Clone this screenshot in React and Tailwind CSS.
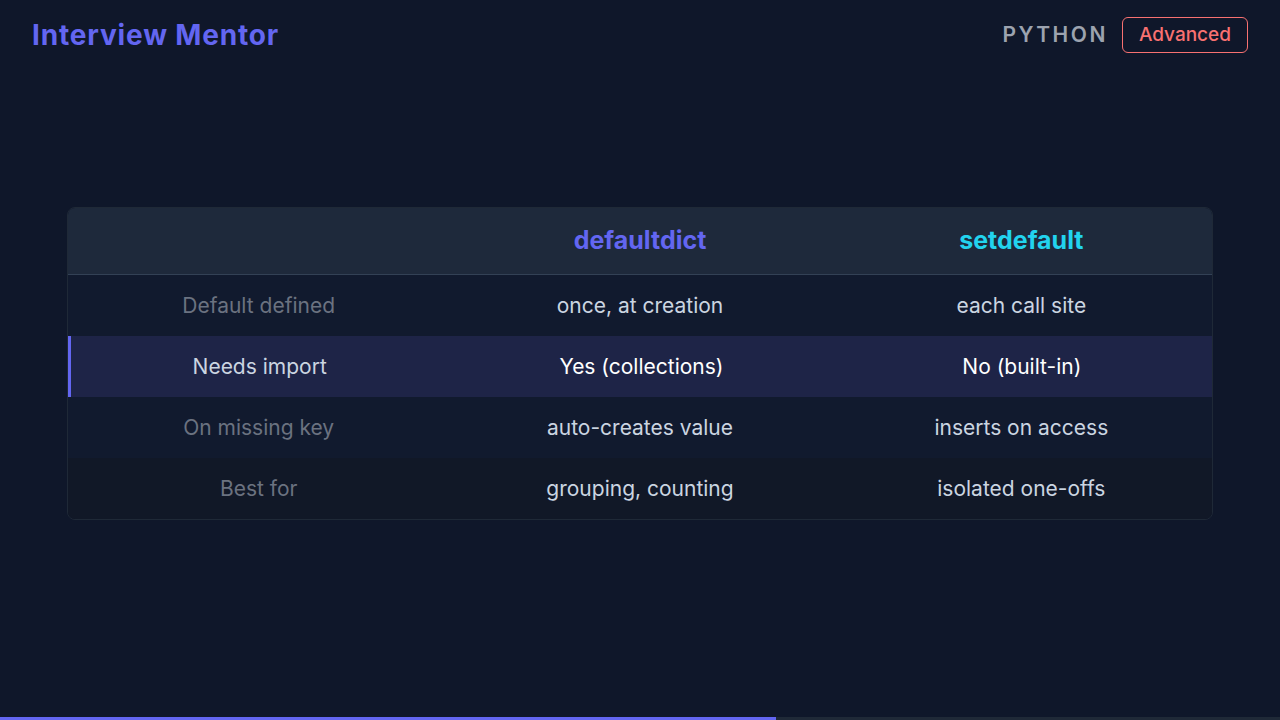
export default function App() {
  const rows = [
    ["Default defined", "once, at creation", "each call site"],
    ["Needs import", "Yes (collections)", "No (built-in)"],
    ["On missing key", "auto-creates value", "inserts on access"],
    ["Best for", "grouping, counting", "isolated one-offs"],
  ];
  return (
    <div className="relative w-[1280px] h-[720px] bg-[#0f172a] overflow-hidden" style={{ fontFamily: "Inter, 'Noto Sans', sans-serif" }}>
      <div className="flex items-center justify-between px-8 pt-[14px]">
        <div className="text-[28px] font-bold text-[#6366f1] tracking-[0.03em]">Interview Mentor</div>
        <div className="flex items-center gap-[14px]">
          <div className="text-[21px] font-semibold tracking-[0.12em] text-[#9ca3af]">PYTHON</div>
          <div className="h-[36px] px-4 flex items-center rounded-md border border-[#f87171] text-[#f87171] text-[19px] font-medium">Advanced</div>
        </div>
      </div>
      <div className="mx-[67px] mt-[151px] rounded-lg border border-[#1f2937] overflow-hidden">
        <div className="grid grid-cols-3 h-[67px] items-center bg-[#1e293b] border-b border-[#334155]">
          <div></div>
          <div className="text-center text-[25px] font-bold text-[#6366f1]">defaultdict</div>
          <div className="text-center text-[25px] font-bold text-[#22d3ee]">setdefault</div>
        </div>
        {rows.map((r, i) => {
          const hl = i === 1;
          return (
            <div key={i} className={"grid grid-cols-3 h-[61px] items-center text-[21px] " + (hl ? "bg-[#1e2447] border-l-[3px] border-[#6366f1]" : i % 2 === 0 ? "bg-[#111a2e]" : "bg-[#111827]")}>
              <div className={"text-center " + (hl ? "text-[#cbd5e1] -ml-[3px]" : "text-[#6b7280]")}>{r[0]}</div>
              <div className={"text-center " + (hl ? "text-white" : "text-[#cbd5e1]")}>{r[1]}</div>
              <div className={"text-center " + (hl ? "text-white" : "text-[#cbd5e1]")}>{r[2]}</div>
            </div>
          );
        })}
      </div>
      <div className="absolute bottom-0 left-0 w-full h-[3px] bg-[#1f2937]">
        <div className="h-full w-[776px] bg-[#6366f1]"></div>
      </div>
    </div>
  );
}
